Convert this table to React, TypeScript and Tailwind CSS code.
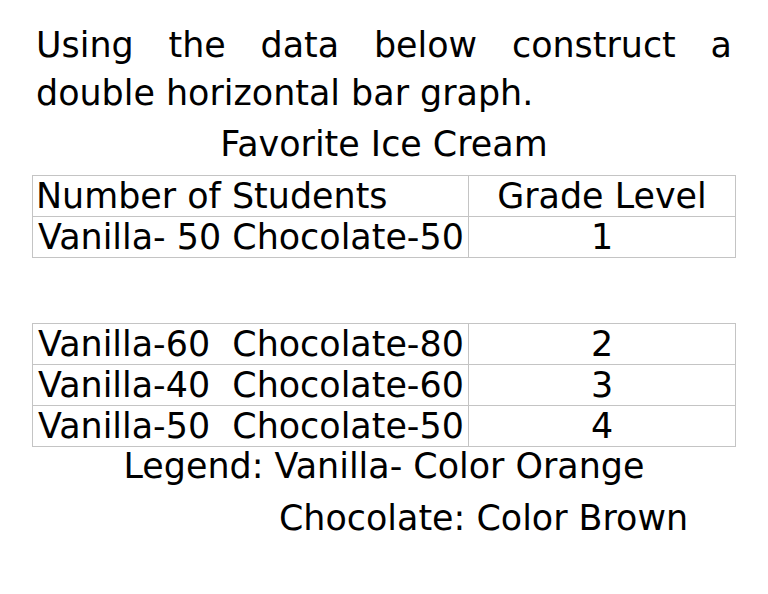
import React from "react";

const font = { fontFamily: '"DejaVu Sans", "Liberation Sans", sans-serif' };

function Row({ left, right, first }: { left: string; right: string; first?: boolean }) {
  return (
    <tr className="h-[41px]">
      <td className={`border border-[#c4c4c4] ${first ? "pl-[3px]" : "pl-[5px]"} whitespace-pre leading-[40px]`}>{left}</td>
      <td className="border border-[#c4c4c4] text-center leading-[40px]">{right}</td>
    </tr>
  );
}

export default function App() {
  return (
    <div className="w-[768px] h-[594px] bg-white text-black text-[34.9px]" style={font}>
      <div className="pt-[21px] px-[36px]">
        <p className="text-justify leading-[48px] w-[696px]">
          Using the data below construct a double horizontal bar graph.
        </p>
      </div>
      <div className="text-center leading-[48px] mt-[3px]">Favorite Ice Cream</div>
      <div className="px-[32px] mt-[7px]">
        <table className="border-collapse w-[704px] table-fixed">
          <colgroup>
            <col className="w-[436px]" />
            <col />
          </colgroup>
          <tbody>
            <Row left="Number of Students" right="Grade Level" first />
            <Row left="Vanilla- 50 Chocolate-50" right="1" />
          </tbody>
        </table>
        <table className="border-collapse w-[704px] table-fixed mt-[65px]">
          <colgroup>
            <col className="w-[436px]" />
            <col />
          </colgroup>
          <tbody>
            <Row left="Vanilla-60  Chocolate-80" right="2" />
            <Row left="Vanilla-40  Chocolate-60" right="3" />
            <Row left="Vanilla-50  Chocolate-50" right="4" />
          </tbody>
        </table>
      </div>
      <div className="text-center leading-[38px]">Legend: Vanilla- Color Orange</div>
      <div className="pl-[279px] leading-[40px] mt-[13px]">Chocolate: Color Brown</div>
    </div>
  );
}
